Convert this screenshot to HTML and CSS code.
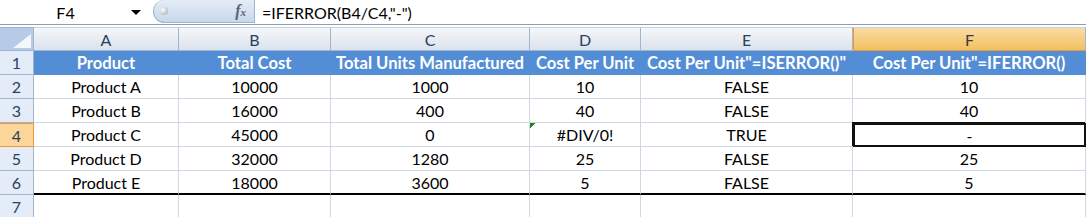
FILE: index.html
```html
<!DOCTYPE html>
<html lang="en">
<head>
    <meta charset="UTF-8">
    <title>IFERROR vs ISERROR</title>
    <link rel="stylesheet" href="styles.css">
</head>
<body>
    <div class="formula-bar">
        <div class="name-box">
            <span class="cell-ref">F4</span>
            <span class="drop"></span>
        </div>
        <div class="fx-pill">
            <span class="dot"></span>
            <span class="fx">f<span class="x">x</span></span>
        </div>
        <div class="formula">=IFERROR(B4/C4,"-")</div>
    </div>

    <div class="sheet">
        <!-- column headers -->
        <div class="corner">
            <svg width="22" height="14" viewBox="0 0 22 14"><polygon points="22,0 22,14 4,14" fill="#f4f7fb"/></svg>
        </div>
        <div class="col-head">A</div>
        <div class="col-head">B</div>
        <div class="col-head">C</div>
        <div class="col-head">D</div>
        <div class="col-head">E</div>
        <div class="col-head selected">F</div>

        <!-- row 1 -->
        <div class="row-head">1</div>
        <div class="cell title">Product</div>
        <div class="cell title">Total Cost</div>
        <div class="cell title">Total Units Manufactured</div>
        <div class="cell title">Cost Per Unit</div>
        <div class="cell title">Cost Per Unit"=ISERROR()"</div>
        <div class="cell title">Cost Per Unit"=IFERROR()</div>

        <!-- row 2 -->
        <div class="row-head">2</div>
        <div class="cell">Product A</div>
        <div class="cell">10000</div>
        <div class="cell">1000</div>
        <div class="cell">10</div>
        <div class="cell">FALSE</div>
        <div class="cell">10</div>

        <!-- row 3 -->
        <div class="row-head">3</div>
        <div class="cell">Product B</div>
        <div class="cell">16000</div>
        <div class="cell">400</div>
        <div class="cell">40</div>
        <div class="cell">FALSE</div>
        <div class="cell">40</div>

        <!-- row 4 -->
        <div class="row-head selected">4</div>
        <div class="cell">Product C</div>
        <div class="cell">45000</div>
        <div class="cell">0</div>
        <div class="cell flagged">#DIV/0!</div>
        <div class="cell">TRUE</div>
        <div class="cell active">-</div>

        <!-- row 5 -->
        <div class="row-head">5</div>
        <div class="cell">Product D</div>
        <div class="cell">32000</div>
        <div class="cell">1280</div>
        <div class="cell">25</div>
        <div class="cell">FALSE</div>
        <div class="cell">25</div>

        <!-- row 6 -->
        <div class="row-head">6</div>
        <div class="cell last">Product E</div>
        <div class="cell last">18000</div>
        <div class="cell last">3600</div>
        <div class="cell last">5</div>
        <div class="cell last">FALSE</div>
        <div class="cell last">5</div>

        <!-- row 7 -->
        <div class="row-head">7</div>
        <div class="cell"></div>
        <div class="cell"></div>
        <div class="cell"></div>
        <div class="cell"></div>
        <div class="cell"></div>
        <div class="cell"></div>
    </div>
</body>
</html>
```

FILE: styles.css
```css
body {
    margin: 0;
    background: #fff;
    font-family: 'Lato', 'Liberation Sans', sans-serif;
    font-size: 16px;
    color: #000;
    overflow: hidden;
}
.formula-bar {
    display: flex;
    height: 24px;
    border-bottom: 1px solid #8d9db3;
}
.name-box {
    width: 153px;
    display: flex;
    align-items: center;
    box-sizing: border-box;
}
.cell-ref {
    width: 131px;
    text-align: center;
}
.drop {
    width: 0;
    height: 0;
    border-left: 5px solid transparent;
    border-right: 5px solid transparent;
    border-top: 5px solid #000;
}
.fx-pill {
    width: 102px;
    height: 23px;
    box-sizing: border-box;
    display: flex;
    align-items: center;
    justify-content: space-between;
    padding: 0 8px 0 6px;
    background: linear-gradient(#e4ecf6, #c9d8ec);
    border: 1px solid #9db3d0;
    border-top: none;
    border-top-left-radius: 12px;
    border-bottom-left-radius: 12px;
}
.dot {
    width: 8px;
    height: 8px;
    border-radius: 50%;
    background: radial-gradient(circle at 35% 35%, #fff, #9aa4b0);
}
.fx {
    font-family: 'Liberation Serif', serif;
    font-style: italic;
    font-weight: bold;
    font-size: 16px;
    color: #5b6573;
}
.fx .x {
    font-size: 11px;
}
.formula {
    flex: 1;
    display: flex;
    align-items: center;
    padding-left: 7px;
}
.sheet {
    display: grid;
    grid-template-columns: 34px 145px 152px 199px 111px 212px 233px;
    grid-auto-rows: 24px;
    margin-top: 2px;
}
.sheet > div {
    box-sizing: border-box;
    display: flex;
    align-items: center;
    justify-content: center;
    white-space: nowrap;
}
.corner {
    background: #b7cbe8;
    border: 1px solid #9eb6ce;
    border-left: none;
    justify-content: flex-end !important;
    align-items: flex-end !important;
    padding: 0 2px 2px 0;
}
.corner svg {
    display: block;
}
.col-head {
    background: linear-gradient(#f5f7fa, #dbe2ec);
    border-top: 1px solid #c5d2e2;
    border-right: 1px solid #9eb6ce;
    border-bottom: 1px solid #9eb6ce;
    color: #27415f;
}
.col-head.selected {
    background: linear-gradient(#f9dba3, #f1c15f);
    border-left: 1px solid #f29536;
    border-bottom: 1px solid #f29536;
    color: #3b3b3b;
}
.row-head {
    background: #e4ecf7;
    border-right: 1px solid #9eb6ce;
    border-bottom: 1px solid #9eb6ce;
    color: #27415f;
}
.row-head.selected {
    background: #fdd69a;
    border: 1px solid #f29536;
    border-left: none;
}
.cell {
    border-right: 1px solid #d0d7e5;
    border-bottom: 1px solid #d0d7e5;
}
.cell.title {
    background: #538dd5;
    border-color: #538dd5;
    color: #fff;
    font-weight: bold;
    font-size: 16.6px;
}
.cell.last {
    border-bottom: 2px solid #000;
}
.cell.flagged {
    background: linear-gradient(135deg, #1b8a1b 4px, transparent 4px) no-repeat;
    background-size: 7px 7px;
}
.cell.active {
    border: 2px solid #111;
    box-shadow: -1px -1px 0 #111;
}
```
